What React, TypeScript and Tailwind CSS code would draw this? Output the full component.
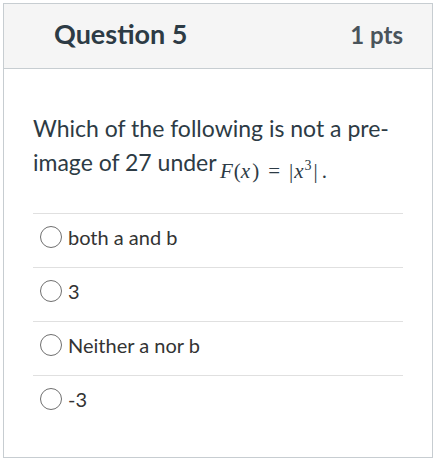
export default function App() {
  const options = ['both a and b', '3', 'Neither a nor b', '-3'];

  return (
    <div className="h-[460px] w-[436px] bg-white p-[3px] font-['Lato','Liberation_Sans',sans-serif] text-[#2d3b45]">
      <div className="flex h-[455px] flex-col border border-[#c7cdd1] bg-white">
        <div className="flex h-[65px] shrink-0 items-center justify-between border-b border-[#c7cdd1] bg-[#f5f5f5] pb-[3px] pl-[50px] pr-[29px]">
          <span className="text-[27px] font-bold text-[#2d3b45]">Question 5</span>
          <span className="text-[24px] font-bold text-[#4a545b]">1 pts</span>
        </div>

        <div className="px-[29px] pt-[42px]">
          <p className="text-[23px] leading-[34px] text-[#2d3b45]">
            Which of the following is not a pre-image of 27 under{' '}
            <span className="relative top-[7px] -ml-[2px] font-['Liberation_Serif',serif] text-[21px] leading-none text-[#2d3b45]">
              <i>F</i>
              <span className="ml-[1px]">(</span>
              <i>x</i>
              <span className="ml-[2px]">)</span>
              <span className="mx-[9px]">=</span>
              <span>|</span>
              <i className="ml-[1px]">x</i>
              <span className="relative -top-[8px] ml-[1px] text-[14px]">3</span>
              <span className="ml-[2px]">|</span>
              <span className="ml-[4px]">.</span>
            </span>
          </p>

          <div className="mt-[34px]">
            {options.map((o) => (
              <div key={o} className="flex h-[54px] items-center gap-[6px] border-t border-[#e0e0e0] pb-[7px] pl-[7px]">
                <span className="h-[22px] w-[22px] shrink-0 rounded-full border border-[#6f6f6f] bg-white" />
                <span className="text-[20px] text-[#333]">{o}</span>
              </div>
            ))}
          </div>
        </div>
      </div>
    </div>
  );
}
